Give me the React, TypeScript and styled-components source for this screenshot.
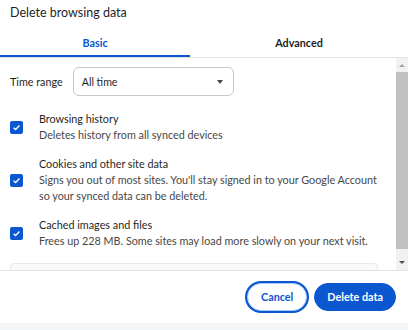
import React from 'react'
import styled, { createGlobalStyle } from 'styled-components'

const GlobalStyle = createGlobalStyle`
  html, body {
    margin: 0;
    padding: 0;
    background: #f4f5f6;
  }
  body {
    font-family: Lato, 'Noto Sans', Arial, sans-serif;
    color: #1f1f1f;
  }
`

const Dialog = styled.div`
  width: 408px;
  height: 323px;
  background: #fff;
  display: flex;
  flex-direction: column;
  overflow: hidden;
`

const Title = styled.div`
  height: 28px;
  padding: 5px 0 0 10px;
  box-sizing: border-box;
  font-size: 12.5px;
  color: #1f1f1f;
`

const Tabs = styled.div`
  display: grid;
  grid-template-columns: 190px 1fr;
  border-bottom: 1px solid #e3e3e3;
`

const Tab = styled.div<{ $active?: boolean }>`
  height: 29px;
  display: flex;
  align-items: center;
  justify-content: center;
  font-size: 10.8px;
  font-weight: 700;
  color: ${p => (p.$active ? '#0b57d0' : '#1f1f1f')};
  border-bottom: 2px solid ${p => (p.$active ? '#0b57d0' : 'transparent')};
  padding-top: 2px;
  box-sizing: border-box;
`

const Body = styled.div`
  flex: 1;
  display: flex;
  min-height: 0;
`

const Content = styled.div`
  flex: 1;
  overflow: hidden;
  padding: 9px 18px 0 10px;
  display: flex;
  flex-direction: column;
  gap: 13px;
`

const RangeRow = styled.div`
  display: flex;
  align-items: center;
  gap: 10px;
  margin-bottom: 2px;
  font-size: 10.8px;
  color: #1f1f1f;
`

const Select = styled.div`
  width: 161px;
  height: 29px;
  box-sizing: border-box;
  border: 1px solid #c7c7c7;
  border-radius: 6px;
  display: flex;
  align-items: center;
  justify-content: space-between;
  padding: 1px 10px 0 8px;
  font-size: 10.6px;
  color: #1f1f1f;
`

const Caret = styled.span`
  width: 0;
  height: 0;
  border-left: 3px solid transparent;
  border-right: 3px solid transparent;
  border-top: 4px solid #474747;
`

const Item = styled.div`
  display: flex;
  align-items: center;
  gap: 16px;
`

const Check = styled.span`
  flex: none;
  width: 13px;
  height: 13px;
  border-radius: 2px;
  background: #0b57d0;
  display: flex;
  align-items: center;
  justify-content: center;
`

const Texts = styled.div`
  font-size: 10.8px;
  line-height: 16px;
  color: #474747;
  white-space: nowrap;
`

const ItemTitle = styled.div`
  color: #1f1f1f;
`

const MoreBox = styled.div`
  height: 20px;
  margin-top: 1px;
  border: 1px solid #e6e7e8;
  border-radius: 4px 4px 0 0;
  background: #f8f9fa;
  flex: none;
`

const Scrollbar = styled.div`
  width: 12px;
  background: #f1f1f1;
  display: flex;
  flex-direction: column;
  align-items: center;
`

const Arrow = styled.span<{ $down?: boolean }>`
  width: 0;
  height: 0;
  margin: ${p => (p.$down ? '5px 0 6px' : '6px 0 5px')};
  border-left: 3px solid transparent;
  border-right: 3px solid transparent;
  ${p => (p.$down ? 'border-top: 3px solid #505050;' : 'border-bottom: 3px solid #a3a3a3;')}
`

const Thumb = styled.div`
  width: 12px;
  height: 177px;
  background: #c1c1c1;
`

const Track = styled.div`
  flex: 1;
`

const Footer = styled.div`
  height: 53px;
  border-top: 1px solid #e3e3e3;
  display: flex;
  align-items: center;
  justify-content: flex-end;
  gap: 7px;
  padding: 0 12px 1px 0;
  box-sizing: border-box;
`

const Button = styled.button<{ $primary?: boolean }>`
  height: 28px;
  border-radius: 14px;
  font-family: inherit;
  font-size: 10.8px;
  font-weight: 700;
  padding: 0 ${p => (p.$primary ? '12px' : '13px')};
  cursor: pointer;
  border: 1px solid ${p => (p.$primary ? '#0b57d0' : '#a8c7fa')};
  background: ${p => (p.$primary ? '#0b57d0' : '#fff')};
  color: ${p => (p.$primary ? '#fff' : '#0b57d0')};
  box-shadow: ${p => (p.$primary ? 'none' : '0 0 0 2px #0b57d0')};
`

const items = [
  { title: 'Browsing history', desc: ['Deletes history from all synced devices'] },
  {
    title: 'Cookies and other site data',
    desc: [
      "Signs you out of most sites. You'll stay signed in to your Google Account",
      'so your synced data can be deleted.',
    ],
  },
  {
    title: 'Cached images and files',
    desc: ['Frees up 228 MB. Some sites may load more slowly on your next visit.'],
  },
]

function CheckMark() {
  return (
    <svg width="9" height="9" viewBox="0 0 10 10">
      <path d="M1.8 5.2 L4 7.3 L8.3 2.8" fill="none" stroke="#fff" strokeWidth="1.5" />
    </svg>
  )
}

export default function App() {
  return (
    <>
      <GlobalStyle />
      <Dialog>
        <Title>Delete browsing data</Title>
        <Tabs>
          <Tab $active>Basic</Tab>
          <Tab>Advanced</Tab>
        </Tabs>
        <Body>
          <Content>
            <RangeRow>
              <span>Time range</span>
              <Select>
                <span>All time</span>
                <Caret />
              </Select>
            </RangeRow>
            {items.map(item => (
              <Item key={item.title}>
                <Check>
                  <CheckMark />
                </Check>
                <Texts>
                  <ItemTitle>{item.title}</ItemTitle>
                  {item.desc.map(line => (
                    <div key={line}>{line}</div>
                  ))}
                </Texts>
              </Item>
            ))}
            <MoreBox />
          </Content>
          <Scrollbar>
            <Arrow />
            <Thumb />
            <Track />
            <Arrow $down />
          </Scrollbar>
        </Body>
        <Footer>
          <Button>Cancel</Button>
          <Button $primary>Delete data</Button>
        </Footer>
      </Dialog>
    </>
  )
}
